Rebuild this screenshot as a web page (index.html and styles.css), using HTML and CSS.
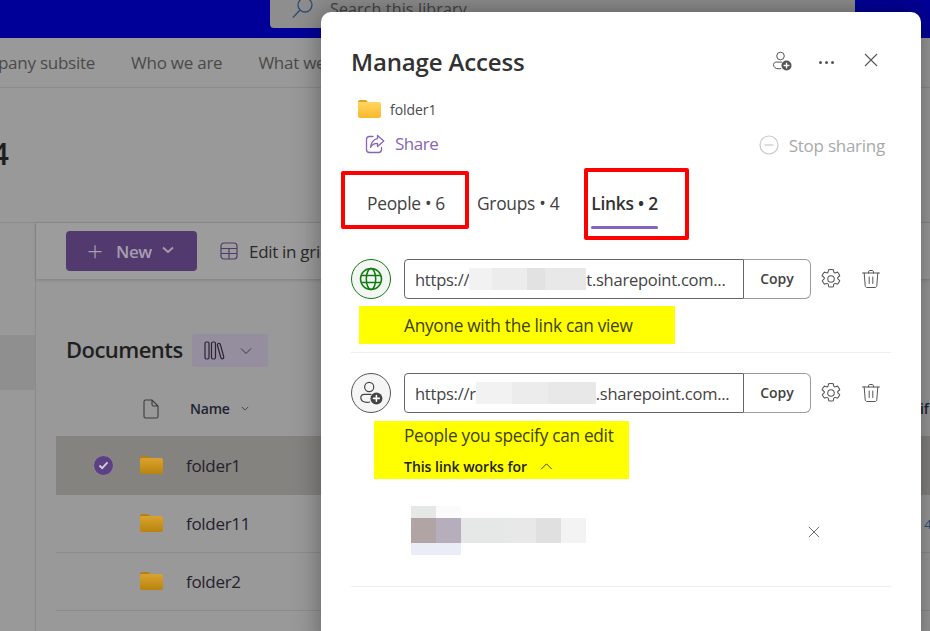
FILE: index.html
```html
<!DOCTYPE html>
<html lang="en">
<head>
<meta charset="utf-8">
<title>Manage Access</title>
<link rel="stylesheet" href="styles.css">
</head>
<body>
<svg class="defs" width="0" height="0" aria-hidden="true">
  <linearGradient id="fold-bg" x1="0" y1="0" x2="0" y2="1">
    <stop offset="0" stop-color="#d9a32e"/><stop offset="1" stop-color="#b9830f"/>
  </linearGradient>
  <linearGradient id="fold-modal" x1="0" y1="0" x2="0" y2="1">
    <stop offset="0" stop-color="#ffd761"/><stop offset="1" stop-color="#fbb82a"/>
  </linearGradient>
  <symbol id="folder" viewBox="0 0 23 18">
    <path d="M0 2.2C0 1 .9 0 2 0h5.2c.6 0 1 .2 1.400.6L10 2H2C.9 2 0 2.700 0 3.800z" fill="var(--tab)"/>
    <path d="M0 3.800C0 2.800.9 2 2 2h19c1.100 0 2 .9 2 2v12c0 1.100-.9 2-2 2H2c-1.100 0-2-.9-2-2z" fill="var(--body)"/>
  </symbol>
  <symbol id="gear" viewBox="1.400 1.400 17.200 17.200">
    <path d="M10 1.800c.7 0 1.300.1 1.900.2l.5 1.900c.1.6.8 1 1.400.8l1.800-.6c.9.9 1.500 1.900 1.900 3.100l-1.400 1.300c-.5.4-.5 1.200 0 1.600l1.400 1.300c-.4 1.200-1 2.200-1.900 3.100l-1.800-.6c-.6-.2-1.300.2-1.400.8l-.5 1.900c-.6.1-1.200.2-1.900.2s-1.300-.1-1.900-.2l-.5-1.900c-.1-.6-.8-1-1.400-.8l-1.800.6c-.9-.9-1.500-1.900-1.900-3.100l1.400-1.300c.5-.4.5-1.200 0-1.600L2.400 7.200c.4-1.200 1-2.200 1.900-3.100l1.800.6c.6.2 1.300-.2 1.400-.8l.5-1.900c.6-.1 1.200-.2 1.900-.2z" fill="none" stroke="currentColor" stroke-width=".9"/>
    <circle cx="10" cy="10" r="2.800" fill="none" stroke="currentColor" stroke-width=".9"/>
  </symbol>
  <symbol id="trash" viewBox="0 0 20 20">
    <path d="M1.500 4h17M7.500 4V2.800c0-.7.500-1.300 1.200-1.300h2.600c.7 0 1.200.6 1.200 1.300V4M3.200 4l1 12.800c.1 1 .9 1.700 1.800 1.700h8c.9 0 1.700-.7 1.800-1.700l1-12.800M8.200 8v6.500M11.800 8v6.500" fill="none" stroke="currentColor" stroke-linecap="round"/>
  </symbol>
  <symbol id="personadd" viewBox="0 0 20 20">
    <circle cx="8.500" cy="5" r="3.800" fill="none" stroke="currentColor"/>
    <path d="M10.200 11.100H4.200C2.700 11.100 1.500 12.300 1.500 13.800c0 2.200 2 4 5.500 4 .8 0 1.500-.1 2.200-.3" fill="none" stroke="currentColor"/>
    <circle cx="14.500" cy="14.500" r="5" fill="currentColor"/>
    <path d="M14.500 12.100v4.800M12.100 14.500h4.800" stroke="#fff" stroke-width="1.300" stroke-linecap="round"/>
  </symbol>
  <symbol id="close" viewBox="0 0 14 14">
    <path d="M1 1l12 12M13 1L1 13" fill="none" stroke="currentColor" stroke-width="1.100"/>
  </symbol>
</svg>

<div class="viewport">
  <div class="page">
    <header class="topbar">
      <div class="search">
        <svg class="search-icon" viewBox="0 0 22 22"><circle cx="13" cy="7" r="7" fill="none" stroke="currentColor" stroke-width="1.300"/><path d="M8 12L1 19.500" stroke="currentColor" stroke-width="1.300"/></svg>
        <span class="search-text">Search this library</span>
      </div>
    </header>
    <nav class="sitenav">
      <span>Company subsite</span><span>Who we are</span><span>What we do</span>
    </nav>
    <div class="sitehead"><span class="sitename">Site 4</span></div>
    <div class="workspace">
      <aside class="leftnav"><div class="leftnav-selected"></div></aside>
      <main class="content">
        <div class="commandbar">
          <button class="newbtn"><span class="plus">+</span><b>New</b><svg class="chev-sm" viewBox="0 0 12 8"><path d="M1 1.500l5 4.500 5-4.500" fill="none" stroke="currentColor" stroke-width="1.800"/></svg></button>
          <svg class="grid-icon" viewBox="0 0 18 18"><rect x="1" y="1" width="16" height="16" rx="3" fill="none" stroke="currentColor" stroke-width="1.200"/><path d="M1 6.500h16M1 11.500h16M9 6.500V17" stroke="currentColor" stroke-width="1.200"/></svg>
          <span class="cmd-text">Edit in grid view</span>
        </div>
        <div class="doc-head">
          <h2>Documents</h2>
          <div class="viewbtn">
            <svg class="lib-icon" viewBox="0 0 21 19"><rect x="1" y="1" width="4" height="17" rx="1.500" fill="none" stroke="currentColor" stroke-width="1.200"/><rect x="7.500" y="1" width="4" height="17" rx="1.500" fill="none" stroke="currentColor" stroke-width="1.200"/><path d="M13.500 4.500c-.3-1 .2-1.800 1-2s1.600.2 1.900 1.200l3.300 12c.3 1-.2 1.800-1 2s-1.600-.2-1.900-1.200z" fill="none" stroke="currentColor" stroke-width="1.200"/></svg>
            <svg class="chev-view" viewBox="0 0 12 8"><path d="M1 1.500l5 5 5-5" fill="none" stroke="currentColor"/></svg>
          </div>
        </div>
        <div class="table">
          <div class="thead">
            <svg class="doc-icon" viewBox="0 0 16 20"><path d="M1 2.500C1 1.700 1.700 1 2.500 1H9l6 6v10.500c0 .8-.7 1.500-1.500 1.500h-11C1.700 19 1 18.300 1 17.500zM9 1v4.500C9 6.300 9.700 7 10.500 7H15" fill="none" stroke="currentColor" stroke-width="1.100"/></svg>
            <b class="th-name">Name</b>
            <svg class="chev-th" viewBox="0 0 10 6"><path d="M1 1l4 4 4-4" fill="none" stroke="currentColor"/></svg>
            <span class="th-right">Modif</span>
          </div>
          <div class="row selected">
            <span class="check"><svg viewBox="0 0 12 10"><path d="M1.500 5l3 3 6-6.500" fill="none" stroke="currentColor" stroke-width="2"/></svg></span>
            <svg class="bg-folder"><use href="#folder"/></svg>
            <span>folder1</span>
          </div>
          <div class="row">
            <span class="check-empty"></span>
            <svg class="bg-folder"><use href="#folder"/></svg>
            <span>folder11</span>
            <span class="row-right">4</span>
          </div>
          <div class="row">
            <span class="check-empty"></span>
            <svg class="bg-folder"><use href="#folder"/></svg>
            <span>folder2</span>
          </div>
        </div>
      </main>
    </div>
  </div>

  <section class="modal">
    <div class="modal-head">
      <h1>Manage Access</h1>
      <div class="head-actions">
        <svg class="ic-person"><use href="#personadd"/></svg>
        <span class="dots"><i></i><i></i><i></i></span>
        <svg class="ic-close"><use href="#close"/></svg>
      </div>
    </div>
    <div class="item-row">
      <svg class="modal-folder"><use href="#folder"/></svg>
      <span>folder1</span>
    </div>
    <div class="share-row">
      <span class="share">
        <svg class="ic-share" viewBox="0 0 20 20"><path d="M8 2.500H4.500c-1.700 0-3 1.300-3 3v10c0 1.700 1.300 3 3 3h9c1.700 0 3-1.300 3-3v-2" fill="none" stroke="currentColor" stroke-width="1.300" stroke-linecap="round"/><path d="M12.500 1.500L18.800 7l-6.300 5.500V9.400C9.500 9.400 7 10.500 5.500 13.500 5.800 9 8.500 5 12.500 4.700z" fill="none" stroke="currentColor" stroke-width="1.300" stroke-linejoin="round"/></svg>
        Share
      </span>
      <span class="stop">
        <svg class="ic-stop" viewBox="0 0 20 20"><circle cx="10" cy="10" r="9" fill="none" stroke="currentColor" stroke-width="1.200"/><path d="M5.500 10h9" stroke="currentColor" stroke-width="1.200"/></svg>
        Stop sharing
      </span>
    </div>
    <div class="tabs">
      <span class="tab">People • 6</span>
      <span class="tab">Groups • 4</span>
      <span class="tab active">Links • 2</span>
    </div>

    <div class="link">
      <div class="link-main">
        <span class="badge globe">
          <svg viewBox="0 0 24 24"><circle cx="12" cy="12" r="10.500" fill="none" stroke="currentColor" stroke-width="1.500"/><ellipse cx="12" cy="12" rx="4.700" ry="10.500" fill="none" stroke="currentColor" stroke-width="1.500"/><path d="M2.500 8.500h19M2.500 15.500h19" stroke="currentColor" stroke-width="1.500"/></svg>
        </span>
        <div class="urlbox">
          <span class="url">https://<span class="redact r1"></span>t.sharepoint.com...</span>
          <span class="copy">Copy</span>
        </div>
        <svg class="ic-gear"><use href="#gear"/></svg>
        <svg class="ic-trash"><use href="#trash"/></svg>
      </div>
      <div class="note note-a"><span>Anyone with the link can view</span></div>
    </div>

    <div class="link second">
      <div class="link-main">
        <span class="badge person"><svg><use href="#personadd"/></svg></span>
        <div class="urlbox">
          <span class="url">https://r<span class="redact r2"></span>.sharepoint.com...</span>
          <span class="copy">Copy</span>
        </div>
        <svg class="ic-gear"><use href="#gear"/></svg>
        <svg class="ic-trash"><use href="#trash"/></svg>
      </div>
      <div class="note note-b">
        <span>People you specify can edit</span>
        <b class="works">This link works for
          <svg class="chev-up" viewBox="0 0 14 8"><path d="M1 7l6-6 6 6" fill="none" stroke="currentColor"/></svg>
        </b>
      </div>
      <div class="recipient">
        <div class="mosaic">
          <i class="m1"></i><i class="m2"></i><i class="m0"></i><i class="m0"></i><i class="m0"></i><i class="m0"></i><i class="m0"></i>
          <i class="m3"></i><i class="m4"></i><i class="m5"></i><i class="m5"></i><i class="m6"></i><i class="m7"></i><i class="m8"></i>
          <i class="m9"></i><i class="m9"></i>
        </div>
        <svg class="ic-x"><use href="#close"/></svg>
      </div>
    </div>
  </section>

  <div class="mark mark-people"></div>
  <div class="mark mark-links"></div>
</div>
</body>
</html>
```
FILE: styles.css
```css
* { box-sizing: border-box; }
html, body { margin: 0; padding: 0; height: 100%; }
body { font-family: "Open Sans", "Noto Sans", sans-serif; color: #222; overflow: hidden; }
.defs { position: absolute; }
svg { display: block; flex: none; }

.viewport { position: relative; width: 930px; height: 631px; overflow: hidden; background: #999; }
.page { width: 930px; height: 631px; display: flex; flex-direction: column; background: #999; }

.topbar { height: 38px; background: #000099; padding-left: 270px; flex: none; }
.search { width: 585px; height: 28px; background: #8e8e8e; border-radius: 0 0 4px 4px; display: flex; align-items: flex-start; position: relative; overflow: hidden; }
.search-icon { width: 22px; height: 22px; color: #2c4f77; margin: -2px 0 0 22px; }
.search-text { font-size: 16px; color: #444; margin: -2px 0 0 16px; letter-spacing: .15px; }

.sitenav { height: 50px; flex: none; display: flex; align-items: center; gap: 36px; margin-left: -38px; border-bottom: 1px solid #8b8b8b; font-size: 17px; color: #4a4a4a; letter-spacing: -.25px; white-space: nowrap; }

.sitehead { height: 135px; flex: none; display: flex; align-items: center; padding-bottom: 4px; border-bottom: 1px solid #8b8b8b; margin-left: -70px; }
.sitename { font-size: 30px; font-weight: 600; color: #1e1e1e; }

.workspace { flex: 1; display: flex; min-height: 0; }
.leftnav { width: 36px; flex: none; border-right: 1px solid #8b8b8b; padding-top: 112px; }
.leftnav-selected { height: 55px; background: #8f8f8f; }
.content { flex: 1; min-width: 0; display: flex; flex-direction: column; }

.commandbar { height: 56px; flex: none; display: flex; align-items: center; padding: 0 0 0 30px; background: #9c9c9c; box-shadow: 0 1px 3px rgba(0,0,0,.18); }
.newbtn { width: 131px; height: 40px; border: 0; border-radius: 4px; background: #523a6e; color: #a69eb1; display: flex; align-items: center; padding: 0 0 0 21px; font: inherit; font-size: 17px; letter-spacing: -.4px; }
.plus { font-size: 28px; font-weight: 300; line-height: 1; width: 29px; text-align: left; margin-top: -3px; }
.newbtn b { font-weight: 600; margin-top: 1px; }
.chev-sm { width: 12px; height: 8px; margin-left: 10px; margin-top: -3px; }
.grid-icon { width: 18px; height: 18px; color: #4f3c6c; margin-left: 23px; }
.cmd-text { font-size: 17px; margin: 1px 0 0 11px; letter-spacing: -.3px; color: #2a2a2a; white-space: nowrap; }

.doc-head { display: flex; align-items: center; height: 33px; margin: 55px 0 0 30px; flex: none; }
.doc-head h2 { margin: -4px 0 0; font-size: 22px; font-weight: 600; letter-spacing: -.55px; color: #1f1f1f; width: 126px; }
.viewbtn { width: 76px; height: 33px; background: #958e9f; border-radius: 3px; display: flex; align-items: center; padding-left: 12px; color: #2d2233; }
.lib-icon { width: 21px; height: 19px; }
.chev-view { width: 12px; height: 8px; margin-left: 15px; color: #3a3a3a; }

.table { margin: 0 0 0 20px; flex: 1; }
.thead { height: 69px; padding-top: 14px; display: flex; align-items: center; font-size: 14px; color: #22222e; position: relative; white-space: nowrap; }
.doc-icon { width: 16px; height: 20px; margin-left: 87px; color: #3d3d3d; }
.th-name { font-weight: 600; margin-left: 31px; letter-spacing: -.2px; }
.chev-th { width: 8px; height: 5px; margin-left: 11px; color: #333; }
.th-right { margin-left: 641px; font-weight: 600; }
.row { height: 58px; display: flex; align-items: center; border-bottom: 1px solid #8c8c8c; font-size: 17px; color: #24222c; letter-spacing: -.3px; white-space: nowrap; }
.row.selected { background: #858380; height: 59px; border-bottom: 0; }
.check, .check-empty { width: 21px; height: 21px; margin-left: 37px; border-radius: 50%; flex: none; }
.check { background: #5d3f86; color: #d3d0d6; display: flex; align-items: center; justify-content: center; border: 1px solid #8f8a96; }
.check svg { width: 11px; height: 9px; }
.bg-folder { width: 23px; height: 18px; margin: -1px 23px 0 26px; --tab: #b67f10; --body: url(#fold-bg); }
.row-right { margin-left: 674px; font-size: 13px; color: #2c4f77; }

.modal { position: absolute; left: 321px; top: 12px; width: 600px; height: 640px; background: #fff; border-radius: 10px; padding: 0 30px; box-shadow: 0 0 28px rgba(0,0,0,.38); color: #323130; }
.modal-head { height: 79px; padding-top: 31px; display: flex; justify-content: space-between; align-items: flex-start; }
.modal-head h1 { margin: 1px 0 0; font-size: 24px; line-height: 36px; font-weight: 600; letter-spacing: -.15px; color: #323232; }
.head-actions { display: flex; align-items: center; margin-top: 7px; padding-right: 13px; color: #555; }
.ic-person { width: 20px; height: 20px; margin-top: 1px; }
.dots { display: flex; gap: 3px; margin-left: 27px; margin-top: 3px; }
.dots i { width: 3px; height: 3px; border-radius: 50%; background: #555; }
.ic-close { width: 14px; height: 14px; margin: -2px 0 0 30px; }

.item-row { height: 36px; display: flex; align-items: center; padding-left: 7px; font-size: 14px; letter-spacing: -.05px; color: #4a4a4a; gap: 9px; }
.modal-folder { width: 23px; height: 18px; --tab: #e6a21a; --body: url(#fold-modal); }

.share-row { height: 37px; padding: 0 6px 4px 14px; display: flex; align-items: center; justify-content: space-between; font-size: 17px; letter-spacing: -.5px; }
.share { display: flex; align-items: center; gap: 10px; color: #8764b8; }
.ic-share { width: 20px; height: 20px; }
.stop { display: flex; align-items: center; gap: 10px; color: #a9a9a9; margin-top: 3px; letter-spacing: -.25px; }
.ic-stop { width: 20px; height: 20px; color: #c8c8c8; }

.tabs { height: 87px; display: flex; align-items: flex-start; padding: 27px 0 0 16px; font-size: 17.400px; letter-spacing: -.3px; color: #424242; gap: 32px; }
.tab { position: relative; line-height: 24px; white-space: nowrap; }
.tab.active { font-weight: 600; color: #323232; }
.tab.active::after { content: ""; position: absolute; left: 0; right: 0; top: 35px; height: 3px; border-radius: 2px; background: #8764b8; }

.link { padding-top: 8px; height: 102px; border-bottom: 1px solid #eee; width: 540px; }
.link.second { height: 234px; padding-top: 20px; }
.link-main { display: flex; align-items: center; height: 40px; }
.badge { width: 40px; height: 40px; border-radius: 50%; flex: none; display: flex; align-items: center; justify-content: center; }
.globe { border: 1px solid #107c10; background: #f3f6f3; color: #107c10; }
.globe svg { width: 24px; height: 24px; }
.person { border: 1px solid #555; background: #f5f5f5; color: #444; }
.person svg { width: 24px; height: 24px; }
.urlbox { width: 407px; height: 40px; margin-left: 13px; display: flex; font-size: 16.500px; letter-spacing: -.25px; }
.url { width: 340px; border: 1px solid #666; border-radius: 4px 0 0 4px; display: flex; align-items: center; padding-left: 10px; white-space: nowrap; color: #444; }
.redact { display: block; height: 22px; flex: none; background: linear-gradient(90deg, #f2f2f2 0 20%, #ececec 20% 50%, #e2e2e2 50% 65%, #e8e8e8 65% 100%); }
.r1 { width: 117px; }
.r2 { width: 120px; background: linear-gradient(90deg, #f2f2f2 0 30%, #ececec 30% 60%, #e8e8e8 60% 100%); }
.copy { flex: 1; border: 1px solid #9a9a9a; border-left: 0; border-radius: 0 6px 6px 0; padding-bottom: 2px; display: flex; align-items: center; justify-content: center; font-size: 14px; font-weight: 600; letter-spacing: 0; color: #424242; }
.ic-gear, .ic-trash { width: 20px; height: 20px; color: #555; }
.ic-gear { margin-left: 10px; }
.ic-trash { margin-left: 20px; }

.note { background: #ff0; color: #3f3f08; font-size: 17.300px; letter-spacing: -.3px; }
.note-a { margin: 7px 0 0 8px; width: 316px; height: 38px; display: flex; align-items: center; padding-left: 45px; }
.note-b { margin: 8px 0 0 23px; width: 255px; height: 58px; padding: 4px 0 0 30px; display: flex; flex-direction: column; }
.note-b > span { line-height: 22px; }
.works { font-size: 14px; font-weight: 600; letter-spacing: -.03px; display: flex; align-items: center; gap: 13px; margin-top: 10px; line-height: 20px; color: #222; }
.chev-up { width: 13px; height: 7px; margin-top: -2px; }

.recipient { display: flex; align-items: flex-start; margin-top: 27px; padding-left: 60px; }
.mosaic { display: grid; grid-template-columns: repeat(7, 25px); grid-template-rows: 12px 25px 12px; width: 175px; }
.mosaic i { display: block; }
.m0 { background: transparent; }
.m1 { background: #e6e8e7; }
.m2 { background: #fbfbfb; }
.m3 { background: #b1a4a4; }
.m4 { background: #b7aebd; }
.m5 { background: #e6e8e7; }
.m6 { background: #e8e8e8; }
.m7 { background: #e0e0e0; }
.m8 { background: #f3f3f3; }
.m9 { background: #eaedf6; }
.ic-x { width: 12px; height: 12px; margin: 20px 0 0 222px; color: #666; }

.mark { position: absolute; border: 4px solid #f00; border-radius: 2px; pointer-events: none; }
.mark-people { left: 341px; top: 171px; width: 128px; height: 58px; }
.mark-links { left: 584px; top: 168px; width: 105px; height: 72px; }
```
